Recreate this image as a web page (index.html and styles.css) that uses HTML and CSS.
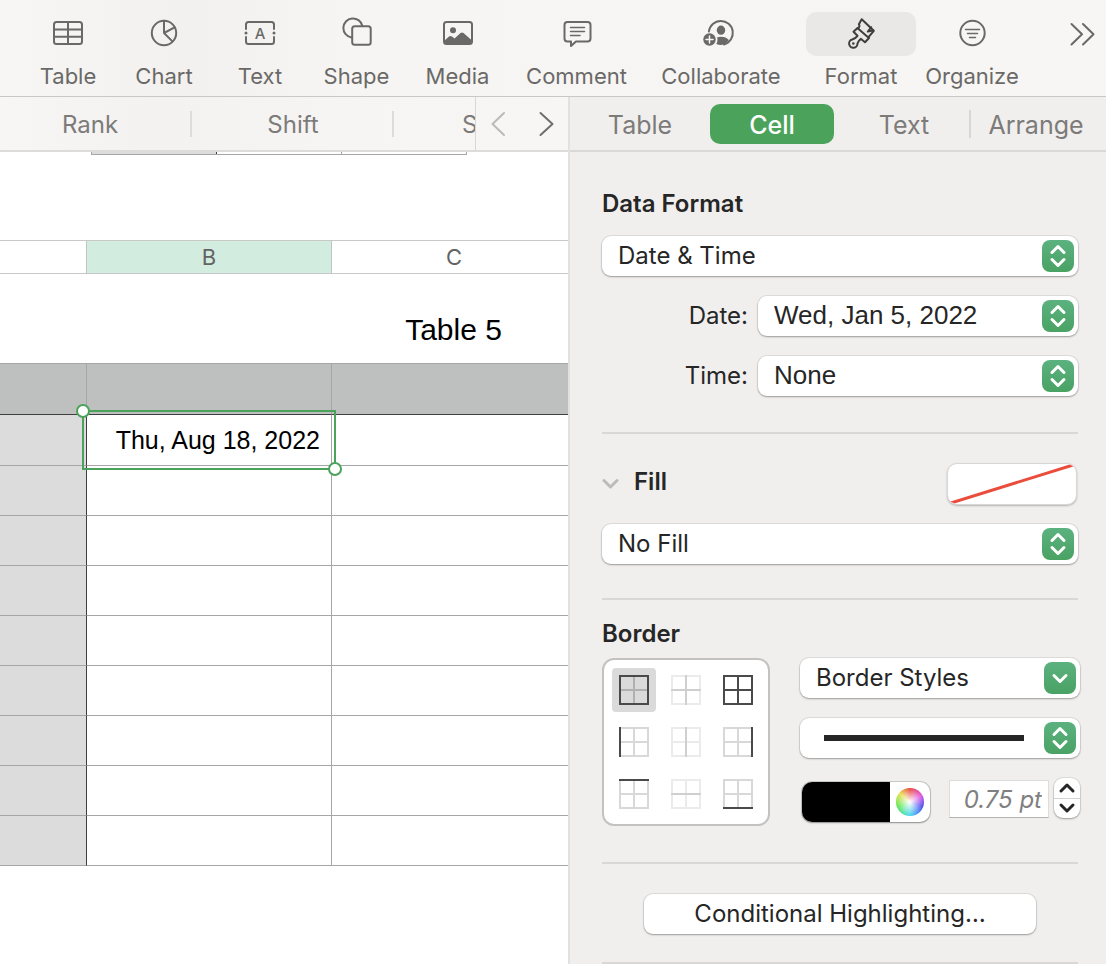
FILE: index.html
```html
<!doctype html>
<html lang="en">
<head>
  <meta charset="UTF-8">
  <title>Table 5</title>
  <link rel="stylesheet" href="styles.css">
</head>
<body>
  <header class="toolbar">
    <div class="tools">
      <button class="tool">
        <span class="icon"><svg viewBox="0 0 36 36"><rect x="4" y="6" width="28" height="22" rx="2.5"/><path d="M4 13.5h28M4 20.7h28M18 6v22"/></svg></span>
        Table
      </button>
      <button class="tool">
        <span class="icon"><svg viewBox="0 0 36 36"><circle cx="18" cy="17" r="12.2"/><path d="M18 4.8V17l10.6-5.6M18 17l8.4 8.4"/></svg></span>
        Chart
      </button>
      <button class="tool">
        <span class="icon"><svg viewBox="0 0 36 36"><path d="M4 13V8.5a2.5 2.5 0 0 1 2.5-2.5h23a2.5 2.5 0 0 1 2.5 2.5V13M4 21v4.5a2.5 2.5 0 0 0 2.5 2.5h23a2.5 2.5 0 0 0 2.5-2.5V21"/><circle class="solid" cx="4" cy="17" r="1.5"/><circle class="solid" cx="32" cy="17" r="1.5"/><text x="18" y="22.5" text-anchor="middle">A</text></svg></span>
        Text
      </button>
      <button class="tool">
        <span class="icon"><svg viewBox="0 0 36 36"><path d="M12.5 21.5A9.6 9.6 0 1 1 23.3 9.8"/><rect x="13.2" y="10.2" width="18.5" height="18.5" rx="2.5"/></svg></span>
        Shape
      </button>
      <button class="tool">
        <span class="icon"><svg viewBox="0 0 36 36"><rect x="4" y="6" width="28" height="22" rx="2.5"/><circle class="solid" cx="13" cy="14.3" r="3"/><path class="solid" d="M4 25l5-4.5q1.5-1 3 0l2.5 2 6-5.5q1.5-1.2 3 0l8.5 7.5V26a2 2 0 0 1-2 2H6a2 2 0 0 1-2-2z"/></svg></span>
        Media
      </button>
      <button class="tool">
        <span class="icon"><svg viewBox="0 0 36 36"><path d="M8.5 6h20a3 3 0 0 1 3 3v13.5a3 3 0 0 1-3 3H17l-5 4.5v-4.5H8.5a3 3 0 0 1-3-3V9a3 3 0 0 1 3-3z"/><path class="thin" d="M11.5 11.5h14M11.5 15.5h14M11.5 19.5h9.5"/></svg></span>
        Comment
      </button>
      <button class="tool">
        <span class="icon"><svg viewBox="0 0 36 36"><path d="M5.9 15.5A12 12 0 1 1 21 28.5"/><ellipse class="solid" cx="18" cy="14.2" rx="4.2" ry="4.6"/><path class="solid" d="M14.5 23.5q0-1.2-.6-1.9 1.7-.9 4.1-.9 5.2 0 7.9 3.4-3 4.6-8 4.8-2.4 0-4.6-.9 1.3-2 1.2-4.5z"/><circle class="solid" cx="6.5" cy="23.5" r="6.2"/><path class="plus" d="M6.5 20v7M3 23.5h7"/></svg></span>
        Collaborate
      </button>
      <button class="tool active">
        <span class="icon"><svg viewBox="0 0 36 36"><path d="M18.7 3.2L30.8 14.8L25.3 21.3L26 22L22 26.2L17.8 22.8Q16 24 14.5 27.4A4.2 4.2 0 1 1 9.2 23.5Q12.5 22.5 14.5 19.8L10.5 15.8L14.5 12L15.3 12.6L16.5 9.8L15.9 8.2z"/><path d="M15 12.5L25.6 21.7M28.3 11.2L24.8 15.6L30 14.5"/><circle class="solid" cx="10.3" cy="27.5" r="1.3"/></svg></span>
        Format
      </button>
      <button class="tool">
        <span class="icon"><svg viewBox="0 0 36 36"><circle cx="18.5" cy="17" r="12.2"/><path class="thin" d="M11.5 13.5h14M13.5 17.5h10M15.5 21.5h6"/></svg></span>
        Organize
      </button>
    </div>
    <button class="more" aria-label="More"><svg viewBox="0 0 36 36"><path d="M6.5 8L17 18.3 6.5 28.5M18 8l10.5 10.3L18 28.5"/></svg></button>
  </header>

  <main class="main">
    <section class="document">
      <nav class="sheets">
        <div class="sheet-list">
          <a href="#" class="sheet">Rank</a>
          <a href="#" class="sheet">Shift</a>
          <a href="#" class="sheet cut">S</a>
        </div>
        <div class="arrows">
          <button class="dim" aria-label="Previous sheet"><svg viewBox="0 0 24 28"><path d="M18 3L6.5 14 18 25"/></svg></button>
          <button aria-label="Next sheet"><svg viewBox="0 0 24 28"><path d="M6.5 3l12 11-12 11"/></svg></button>
        </div>
      </nav>

      <div class="canvas">
        <div class="table-above"><span></span><span></span><span></span></div>

        <table class="grid">
          <colgroup><col class="col-a"><col class="col-b"><col></colgroup>
          <thead>
            <tr class="letters"><th></th><th class="on">B</th><th>C</th></tr>
            <tr class="name"><td colspan="2"></td><td>Table 5</td></tr>
            <tr class="head"><th></th><th></th><th></th></tr>
          </thead>
          <tbody>
            <tr><th></th><td class="selected">Thu, Aug 18, 2022<i class="handle start"></i><i class="handle end"></i></td><td></td></tr>
            <tr><th></th><td></td><td></td></tr>
            <tr><th></th><td></td><td></td></tr>
            <tr><th></th><td></td><td></td></tr>
            <tr><th></th><td></td><td></td></tr>
            <tr><th></th><td></td><td></td></tr>
            <tr><th></th><td></td><td></td></tr>
            <tr><th></th><td></td><td></td></tr>
            <tr><th></th><td></td><td></td></tr>
          </tbody>
        </table>
      </div>
    </section>

    <aside class="inspector">
      <nav class="tabs">
        <button class="tab">Table</button>
        <button class="tab current">Cell</button>
        <button class="tab">Text</button>
        <button class="tab split">Arrange</button>
      </nav>

      <section class="panel">
        <h2><label for="format">Data Format</label></h2>
        <div class="popup">
          <select id="format"><option>Date &amp; Time</option></select>
          <svg class="knob" viewBox="0 0 32 32"><path d="M10 12.5l6-6 6 6M10 19.5l6 6 6-6"/></svg>
        </div>
        <div class="field">
          <label for="date">Date:</label>
          <div class="popup value">
            <select id="date"><option>Wed, Jan 5, 2022</option></select>
            <svg class="knob" viewBox="0 0 32 32"><path d="M10 12.5l6-6 6 6M10 19.5l6 6 6-6"/></svg>
          </div>
        </div>
        <div class="field">
          <label for="time">Time:</label>
          <div class="popup value">
            <select id="time"><option>None</option></select>
            <svg class="knob" viewBox="0 0 32 32"><path d="M10 12.5l6-6 6 6M10 19.5l6 6 6-6"/></svg>
          </div>
        </div>
      </section>

      <section class="panel fill">
        <div class="fill-head">
          <button class="toggle" aria-label="Collapse fill"><svg viewBox="0 0 18 12"><path d="M2 2.5L8.5 9 15 2.5"/></svg></button>
          <h2><label for="fill">Fill</label></h2>
          <button class="swatch" aria-label="Fill color"><svg viewBox="0 0 128 40" preserveAspectRatio="none"><path d="M3 39L125 1"/></svg></button>
        </div>
        <div class="popup">
          <select id="fill"><option>No Fill</option></select>
          <svg class="knob" viewBox="0 0 32 32"><path d="M10 12.5l6-6 6 6M10 19.5l6 6 6-6"/></svg>
        </div>
      </section>

      <section class="panel border">
        <h2>Border</h2>
        <div class="border-row">
          <div class="edges">
            <button class="edge on" aria-label="Outside"><svg viewBox="0 0 30 30"><path class="mid" d="M15 2v26M2 15h26"/><path class="dark" d="M1 1h28v28H1z"/></svg></button>
            <button class="edge" aria-label="Inside"><svg viewBox="0 0 30 30"><path class="faint" d="M1 1h28v28H1z"/><path class="soft" d="M15 0v30M0 15h30"/></svg></button>
            <button class="edge" aria-label="All"><svg viewBox="0 0 30 30"><path class="dark" d="M1 1h28v28H1zM15 1v28M1 15h28"/></svg></button>
            <button class="edge" aria-label="Left"><svg viewBox="0 0 30 30"><path class="light" d="M1 1h28v28H1zM15 1v28M1 15h28"/><path class="dark" d="M1 0v30"/></svg></button>
            <button class="edge" aria-label="Inside vertical"><svg viewBox="0 0 30 30"><path class="faint" d="M1 1h28v28H1zM1 15h28"/><path class="soft" d="M15 0v30"/></svg></button>
            <button class="edge" aria-label="Right"><svg viewBox="0 0 30 30"><path class="light" d="M1 1h28v28H1zM15 1v28M1 15h28"/><path class="dark" d="M29 0v30"/></svg></button>
            <button class="edge" aria-label="Top"><svg viewBox="0 0 30 30"><path class="light" d="M1 1h28v28H1zM15 1v28M1 15h28"/><path class="dark" d="M0 1h30"/></svg></button>
            <button class="edge" aria-label="Inside horizontal"><svg viewBox="0 0 30 30"><path class="faint" d="M1 1h28v28H1zM15 1v28"/><path class="soft" d="M0 15h30"/></svg></button>
            <button class="edge" aria-label="Bottom"><svg viewBox="0 0 30 30"><path class="light" d="M1 1h28v28H1zM15 1v28M1 15h28"/><path class="dark" d="M0 29h30"/></svg></button>
          </div>

          <div class="border-style">
            <div class="popup">
              <select aria-label="Border styles"><option>Border Styles</option></select>
              <svg class="knob" viewBox="0 0 32 32"><path d="M10 13.5l6 6 6-6"/></svg>
            </div>
            <button class="popup line" aria-label="Line style">
              <span></span>
              <svg class="knob" viewBox="0 0 32 32"><path d="M10 12.5l6-6 6 6M10 19.5l6 6 6-6"/></svg>
            </button>
            <div class="stroke">
              <button class="well" aria-label="Border color"><span class="ink"></span><span class="wheel"></span></button>
              <input class="width" type="text" value="0.75 pt" aria-label="Border width">
              <div class="stepper">
                <button aria-label="Thicker"><svg viewBox="0 0 20 12"><path d="M4 9l6-6 6 6"/></svg></button>
                <button aria-label="Thinner"><svg viewBox="0 0 20 12"><path d="M4 3l6 6 6-6"/></svg></button>
              </div>
            </div>
          </div>
        </div>
      </section>

      <section class="panel rules">
        <button class="wide">Conditional Highlighting…</button>
      </section>
    </aside>
  </main>
</body>
</html>
```
FILE: styles.css
```css
*{box-sizing:border-box;}
body{margin:0; min-height:100vh; display:flex; flex-direction:column; background:#fff; color:#262626; font-family:Inter,"Liberation Sans",sans-serif; font-size:24px;}
button,select,input{margin:0; padding:0; border:0; background:none; color:inherit; font:inherit;}
h2{margin:0; font-size:24px; line-height:28px; font-weight:600;}
svg{display:block; fill:none; stroke:currentColor; stroke-width:2; stroke-linecap:round; stroke-linejoin:round;}
svg .solid{fill:currentColor; stroke:none;}
svg .thin{stroke-width:1.5;}

/* toolbar */
.toolbar{display:flex; height:97px; padding-left:20px; border-bottom:1px solid #c9c8c7; background:linear-gradient(90deg,#f7f6f4,#f2f1ef 17%,#f6f5f3 32%,#f7f6f4); color:#6a6967;}
.tools{flex:1; display:grid; grid-template-columns:96fr 96fr 96fr 97fr 105fr 133fr 156fr 124fr 98fr;}
.tool{display:flex; flex-direction:column; align-items:center; padding-top:12px; font-size:22px; line-height:26px; white-space:nowrap;}
.icon{display:flex; align-items:center; justify-content:center; width:110px; height:44px; margin:0 -7px 7px; border-radius:10px;}
.icon svg{width:36px; height:36px; overflow:visible;}
.icon text{font-size:15px; fill:currentColor; stroke:none; font-weight:500;}
.icon .plus{stroke:#f7f6f4; stroke-width:1.5;}
.active .icon{background:#e9e8e6; color:#3f3e3d;}
.more{display:flex; justify-content:flex-end; width:85px; padding:16px 5px 0 0;}
.more svg{width:36px; height:36px;}

.main{flex:1; display:flex;}

/* sheet tabs */
.document{flex:1; min-width:0; overflow:hidden;}
.sheets{display:flex; height:55px; border-bottom:2px solid #dddcdb; background:linear-gradient(90deg,#f7f6f4,#f3f2f0 28%,#f6f5f3 60%,#f7f6f4); color:#7c7b7a;}
.sheet-list{flex:1; display:flex; min-width:0; overflow:hidden; border-right:1px solid #d8d7d6;}
.sheet{flex:0 0 202px; position:relative; line-height:56px; text-align:center; color:inherit; text-decoration:none;}
.sheet:first-child{flex-basis:192px; padding-right:12px;}
.sheet:not(.cut)::after{content:""; position:absolute; right:0; top:14px; width:2px; height:26px; background:#dddcdb;}
.cut{padding-left:68px; text-align:left;}
.arrows{display:flex; align-items:center; justify-content:space-between; width:92px; padding:0 10px; color:#6f6e6d;}
.arrows .dim{color:#bbbab9;}
.arrows svg{width:24px; height:28px;}

/* canvas */
.canvas{font-family:"Liberation Sans",Arial,sans-serif; color:#000;}
.table-above{display:flex; width:376px; height:3px; margin:0 0 85px 91px; border:solid #a6a6a6; border-width:0 1px 1px;}
.table-above span{flex:1; border-right:1px solid #a6a6a6;}
.table-above span:first-child{background:#dcdcdc; border-color:#3f3f3f;}
.table-above span:last-child{border:0;}
.grid{width:calc(100% + 8px); table-layout:fixed; border-collapse:separate; border-spacing:0;}
.grid th,.grid td{padding:0; border:0 solid #a6a6a6; font-weight:400;}
.col-a{width:86px;}
.col-b{width:245px;}
.letters th{height:34px; border-width:1px 0; border-color:#c8c8c8; color:#636363; font-family:Inter,sans-serif; font-size:22px; line-height:32px;}
.letters .on,.letters .on + th{border-left:1px solid #b9c9c0;}
.letters .on{background:#d2eddf;}
.name td{height:89px; padding-top:22px; font-size:30px; text-align:center;}
.grid .head th{height:51px; border-top-width:1px; border-left-width:1px; background:#bdc0bf;}
.grid tr th:first-child{border-left-width:0;}
.grid tbody th,.grid tbody td{height:50px; border-top-width:1px; border-left-width:1px;}
.grid tbody th{background:#dcdcdc;}
.grid tbody th + td{border-left-color:#3f3f3f;}
.grid tbody tr:first-child > *{height:51px; border-top-color:#3f3f3f;}
.grid tbody tr:last-child > *{height:51px; border-bottom-width:1px;}
.grid .selected{position:relative; padding-right:11px; font-size:25px; text-align:right;}
.selected::after{content:""; position:absolute; top:-5px; right:-5px; bottom:-5px; left:-5px; border:2px solid #4ba35b;}
.handle{position:absolute; z-index:1; width:14px; height:14px; border:2px solid #4ba35b; border-radius:50%; background:#fff;}
.start{top:-11px; left:-11px;}
.end{right:-11px; bottom:-11px;}

/* inspector */
.inspector{flex:0 0 538px; min-width:0; border-left:2px solid #e2e1e0; background:#f0efed;}
.tabs{display:grid; grid-template-columns:repeat(4,1fr); gap:8px; height:55px; padding:7px 8px; border-bottom:2px solid #dad9d8; color:#7c7b7a;}
.tab{position:relative; height:40px; padding-top:2px; border-radius:10px; font-size:25px; line-height:38px;}
.current{background:#4ba35b; color:#fff; font-weight:500;}
.split::before{content:""; position:absolute; left:-5px; top:6px; width:2px; height:28px; background:#d8d7d6;}
.panel{margin:0 28px 0 32px; padding:38px 0 36px; border-bottom:2px solid #d9d8d7;}
.panel .popup{margin-top:18px;}
.popup{display:block; position:relative; height:40px; border-radius:9px; background:#fff; box-shadow:0 0 0 1px rgba(0,0,0,.07),0 1px 2px rgba(0,0,0,.3);}
.popup select{display:block; width:100%; height:40px; padding:0 44px 2px 16px; appearance:none; border-radius:9px;}
.value select{font-family:"Liberation Sans",Arial,sans-serif; font-size:26px;}
.knob{position:absolute; top:4px; right:4px; width:32px; height:32px; border-radius:8px; background:linear-gradient(#5bb27f,#4aa264); color:#fff; stroke-width:3; pointer-events:none;}
.field{display:flex; align-items:center; justify-content:flex-end; gap:10px; margin-top:20px;}
.field label{padding-bottom:2px;}
.field .popup{width:320px; margin:0;}

.fill{padding-top:29px; padding-bottom:34px;}
.fill-head{display:flex; align-items:center; margin-bottom:19px;}
.fill-head h2{padding-bottom:4px;}
.fill .popup{margin-top:0;}
.toggle{width:18px; margin-right:14px; color:#bcbbba;}
.toggle svg{width:18px; height:12px; stroke-width:3;}
.swatch{width:130px; height:42px; margin:0 1px 0 auto; border:1px solid #d8d7d6; border-radius:10px; background:#fff; box-shadow:0 1px 2px rgba(0,0,0,.25); overflow:hidden;}
.swatch svg{width:100%; height:40px; stroke:#eb4d3d; stroke-width:3;}

.border{padding-top:20px;}
.border-row{display:flex; gap:30px; margin:10px -2px 0 0;}
.edges{display:grid; grid-template-columns:repeat(3,44px); gap:8px; padding:8px; border:2px solid #c3c2c1; border-radius:12px; background:#fff;}
.edge{height:44px; padding:7px; border-radius:4px;}
.edge.on{background:#dadada;}
.edge svg{width:30px; height:30px; stroke-linecap:butt; stroke-linejoin:miter;}
.dark{stroke:#4a4a4a;}
.mid{stroke:#b0b0b0;}
.soft{stroke:#cfcfcf;}
.light{stroke:#d8d8d8;}
.faint{stroke:#ebebeb;}
.border-style{flex:1; min-width:0; display:flex; flex-direction:column; gap:20px;}
.border-style .popup{width:100%; margin:0;}
.line span{display:block; height:6px; margin:0 56px 0 24px; background:#262626;}
.stroke{display:flex; align-items:flex-start;}
.well{display:flex; align-items:center; flex:0 0 128px; height:40px; margin:4px 19px 0 2px; border-radius:10px; background:#fff; box-shadow:0 0 0 1px rgba(0,0,0,.15),0 1px 2px rgba(0,0,0,.3); overflow:hidden;}
.ink{width:88px; height:40px; background:#000;}
.wheel{width:28px; height:28px; margin-left:6px; border-radius:50%; background:radial-gradient(#fff,rgba(255,255,255,0) 70%),conic-gradient(#e8453c,#e04fe0 60deg,#4a4af0 110deg,#4ad8f0 180deg,#5be650 250deg,#e8e04a 310deg,#e8453c);}
.width{flex:1; width:100%; min-width:0; height:38px; margin:2px 5px 0 0; padding-right:6px; border:1px solid #dddcdb; border-bottom-color:#b5b4b3; background:#fff; color:#808080; font-style:italic; text-align:right;}
.stepper{display:flex; flex-direction:column; flex:0 0 26px; height:40px; border-radius:9px; background:#fff; box-shadow:0 0 0 1px rgba(0,0,0,.07),0 1px 2px rgba(0,0,0,.3);}
.stepper button{flex:1; padding:0 3px;}
.stepper button + button{border-top:1px solid #d5d4d3;}
.stepper svg{width:20px; height:12px; stroke-width:3;}

.rules{padding:30px 0 28px;}
.wide{display:block; width:392px; height:40px; margin:0 auto; padding-bottom:2px; border-radius:9px; background:#fff; box-shadow:0 0 0 1px rgba(0,0,0,.07),0 1px 2px rgba(0,0,0,.3);}
```
